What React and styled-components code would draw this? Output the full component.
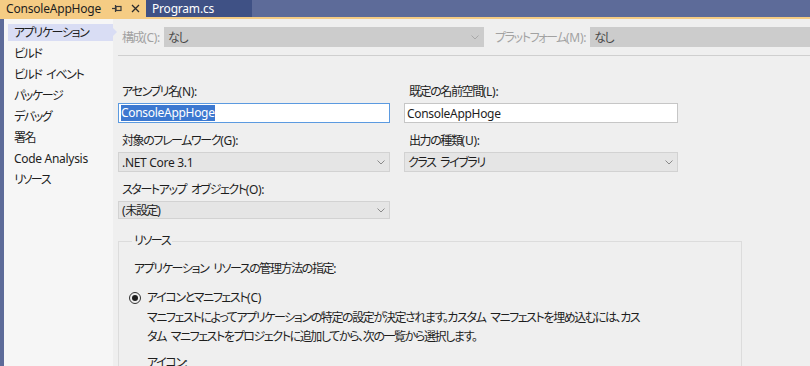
import React from 'react';
import styled, { createGlobalStyle } from 'styled-components';

const vsBlue = '#5d6b99';
const tabGold = '#f5cc84';
const panelBg = '#efefef';
const textMain = '#1e1e1e';
const textDisabled = '#a2a2a2';
const lineGray = '#dcdcdc';

const GlobalStyle = createGlobalStyle`
  html, body {
    margin: 0;
    padding: 0;
    background: ${panelBg};
  }
  body {
    font-family: 'Noto Sans', 'Noto Sans CJK JP', sans-serif;
    font-size: 12px;
    font-feature-settings: 'palt';
    letter-spacing: -1.4px;
    word-spacing: 3px;
    color: ${textMain};
  }
`;

const Latin = styled.span`
  letter-spacing: -0.3px;
  word-spacing: 0;
`;

const Page = styled.div`
  width: 810px;
  height: 366px;
  display: flex;
  flex-direction: column;
  overflow: hidden;
`;

const TabBar = styled.div`
  height: 17px;
  display: flex;
  background: ${vsBlue};
  border-bottom: 2px solid ${tabGold};
`;

const Tab = styled.div`
  display: flex;
  align-items: center;
  gap: 8px;
  width: ${p => p.$width}px;
  padding-left: 6px;
  box-sizing: border-box;
  background: ${p => (p.$active ? tabGold : '#3f5185')};
  color: ${p => (p.$active ? textMain : '#ffffff')};
  line-height: 17px;
`;

const TabTitle = styled.span`
  flex: 1;
  white-space: nowrap;
  letter-spacing: -0.2px;
`;

const TabIcons = styled.span`
  display: flex;
  align-items: center;
  gap: 9px;
  padding-right: 6px;
`;

const Body = styled.div`
  flex: 1;
  display: flex;
  border-left: 4px solid ${vsBlue};
  min-height: 0;
`;

const Nav = styled.nav`
  width: 109px;
  flex-shrink: 0;
  background: #f6f6f6;
  padding-top: 5px;
`;

const NavItem = styled.div`
  position: relative;
  height: 17px;
  line-height: 17px;
  margin: 0 0 4px 4px;
  padding-left: 6px;
  white-space: nowrap;
  background: ${p => (p.$selected ? '#d9ddf4' : 'transparent')};

  &::after {
    content: '';
    display: ${p => (p.$selected ? 'block' : 'none')};
    position: absolute;
    right: -4px;
    top: 4px;
    border-left: 4px solid #d9ddf4;
    border-top: 4px solid transparent;
    border-bottom: 4px solid transparent;
  }
`;

const Content = styled.main`
  flex: 1;
  padding-left: 5px;
  overflow: hidden;
`;

const ConfigRow = styled.div`
  display: flex;
  align-items: center;
  padding: 8px 0 8px 4px;
  border-bottom: 1px solid #cfcfcf;
  white-space: nowrap;
`;

const ConfigLabel = styled.span`
  color: ${textDisabled};
  margin-right: 4px;
`;

const Combo = styled.div`
  display: flex;
  align-items: center;
  justify-content: space-between;
  flex-shrink: 0;
  box-sizing: border-box;
  width: ${p => p.$width}px;
  height: ${p => p.$height || 20}px;
  padding: 0 4px 0 3px;
  margin-right: ${p => p.$gap || 0}px;
  background: ${p => (p.$disabled ? '#cccccc' : '#e5e5e5')};
  border: 1px solid ${p => (p.$disabled ? '#cccccc' : '#d2d2d2')};
  color: ${p => (p.$disabled ? '#4a4a4a' : textMain)};
  overflow: hidden;
`;

const FormGrid = styled.div`
  display: grid;
  grid-template-columns: 272px 274px;
  column-gap: 14px;
  row-gap: 10px;
  padding-top: 28px;
`;

const Field = styled.div`
  display: flex;
  flex-direction: column;
`;

const FieldLabel = styled.label`
  height: 16px;
  line-height: 16px;
  padding-left: ${p => (p.$right ? 5 : 4)}px;
  margin-bottom: 3px;
  white-space: nowrap;
`;

const TextBox = styled.div`
  box-sizing: border-box;
  height: 20px;
  display: flex;
  align-items: center;
  padding-left: 2px;
  background: #ffffff;
  border: 1px solid ${p => (p.$focused ? '#5b9ae0' : '#c6c6c6')};
`;

const Selection = styled.span`
  background: #3c78d0;
  color: #ffffff;
  line-height: 16px;
`;

const GroupBox = styled.fieldset`
  width: 624px;
  box-sizing: border-box;
  margin: 14px 0 0 0;
  padding: 0 0 0 10px;
  border: 1px solid ${lineGray};
  border-bottom: none;
  min-width: 0;
`;

const Legend = styled.legend`
  padding: 0 2px;
  margin-left: 3px;
  line-height: 16px;
`;

const Instruction = styled.div`
  margin: 12px 0 0 5px;
  line-height: 16px;
`;

const RadioRow = styled.div`
  display: flex;
  align-items: center;
  gap: 6px;
  margin-top: 13px;
  line-height: 16px;
`;

const RadioCircle = styled.span`
  width: 12px;
  height: 12px;
  box-sizing: border-box;
  border-radius: 50%;
  border: 1px solid #333333;
  display: flex;
  align-items: center;
  justify-content: center;

  &::before {
    content: '';
    width: 6px;
    height: 6px;
    border-radius: 50%;
    background: #1e1e1e;
  }
`;

const Description = styled.p`
  margin: 2px 0 0 18px;
  line-height: 19px;
`;

const SubLabel = styled.div`
  margin: 9px 0 0 18px;
  line-height: 16px;
`;

const Chevron = ({ color = '#8a8a8a' }) => (
  <svg width="8" height="5" viewBox="0 0 8 5">
    <polyline points="0.5,0.5 4,4 7.5,0.5" fill="none" stroke={color} strokeWidth="1" />
  </svg>
);

const PinIcon = () => (
  <svg width="10" height="9" viewBox="0 0 10 9">
    <line x1="0" y1="4.5" x2="3" y2="4.5" stroke="#3b3b3b" strokeWidth="1.2" />
    <line x1="3.5" y1="1" x2="3.5" y2="8" stroke="#3b3b3b" strokeWidth="1.2" />
    <rect x="4" y="2.5" width="5" height="4" fill="none" stroke="#3b3b3b" strokeWidth="1.2" />
  </svg>
);

const CloseIcon = () => (
  <svg width="9" height="9" viewBox="0 0 9 9">
    <path d="M1 1 L8 8 M8 1 L1 8" stroke="#2b2b2b" strokeWidth="1.3" />
  </svg>
);

// "アセンブリ名" + "N" -> アセンブリ名(N):
const Caption = ({ text, hotkey }) => (
  <>
    {text}
    <Latin>({hotkey}):</Latin>
  </>
);

const navItems = [
  'アプリケーション',
  'ビルド',
  'ビルド イベント',
  'パッケージ',
  'デバッグ',
  '署名',
  'Code Analysis',
  'リソース',
];

export default function App() {
  return (
    <>
      <GlobalStyle />
      <Page>
        <TabBar>
          <Tab $active $width={146}>
            <TabTitle>ConsoleAppHoge</TabTitle>
            <TabIcons>
              <PinIcon />
              <CloseIcon />
            </TabIcons>
          </Tab>
          <Tab $width={106}>
            <TabTitle>Program.cs</TabTitle>
          </Tab>
        </TabBar>
        <Body>
          <Nav>
            {navItems.map((item, i) => (
              <NavItem key={item} $selected={i === 0}>
                {/^[A-Za-z ]+$/.test(item) ? <Latin>{item}</Latin> : item}
              </NavItem>
            ))}
          </Nav>
          <Content>
            <ConfigRow>
              <ConfigLabel><Caption text="構成" hotkey="C" /></ConfigLabel>
              <Combo $disabled $width={320} $gap={11}>
                <span>なし</span>
                <Chevron color="#a8a8a8" />
              </Combo>
              <ConfigLabel><Caption text="プラットフォーム" hotkey="M" /></ConfigLabel>
              <Combo $disabled $width={240}>
                <span>なし</span>
              </Combo>
            </ConfigRow>

            <FormGrid>
              <Field>
                <FieldLabel><Caption text="アセンブリ名" hotkey="N" /></FieldLabel>
                <TextBox $focused>
                  <Selection><Latin>ConsoleAppHoge</Latin></Selection>
                </TextBox>
              </Field>
              <Field>
                <FieldLabel $right><Caption text="既定の名前空間" hotkey="L" /></FieldLabel>
                <TextBox><Latin>ConsoleAppHoge</Latin></TextBox>
              </Field>
              <Field>
                <FieldLabel><Caption text="対象のフレームワーク" hotkey="G" /></FieldLabel>
                <Combo $width={272}>
                  <Latin>.NET Core 3.1</Latin>
                  <Chevron />
                </Combo>
              </Field>
              <Field>
                <FieldLabel $right><Caption text="出力の種類" hotkey="U" /></FieldLabel>
                <Combo $width={274}>
                  <span>クラス ライブラリ</span>
                  <Chevron />
                </Combo>
              </Field>
              <Field>
                <FieldLabel><Caption text="スタートアップ オブジェクト" hotkey="O" /></FieldLabel>
                <Combo $width={272} $height={18}>
                  <span><Latin>(</Latin>未設定<Latin>)</Latin></span>
                  <Chevron />
                </Combo>
              </Field>
            </FormGrid>

            <GroupBox>
              <Legend>リソース</Legend>
              <Instruction>アプリケーション リソースの管理方法の指定<Latin>:</Latin></Instruction>
              <RadioRow>
                <RadioCircle />
                <span>アイコンとマニフェスト<Latin>(C)</Latin></span>
              </RadioRow>
              <Description>
                マニフェストによってアプリケーションの特定の設定が決定されます。カスタム マニフェストを埋め込むには、カス
                <br />
                タム マニフェストをプロジェクトに追加してから、次の一覧から選択します。
              </Description>
              <SubLabel>アイコン<Latin>:</Latin></SubLabel>
            </GroupBox>
          </Content>
        </Body>
      </Page>
    </>
  );
}
